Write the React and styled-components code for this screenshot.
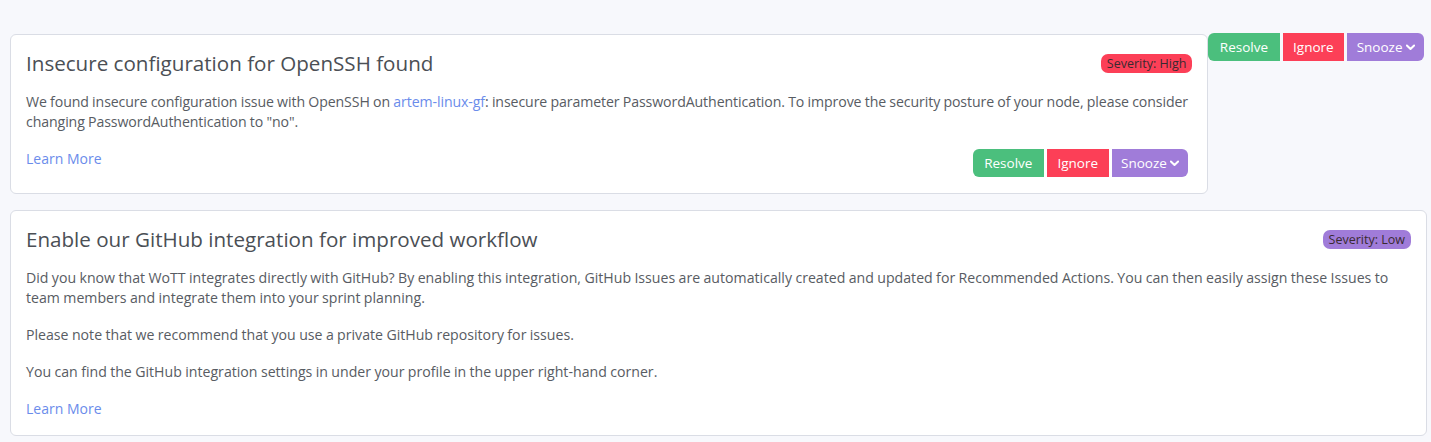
import React from "react";
import styled, { createGlobalStyle } from "styled-components";

const GlobalStyle = createGlobalStyle`
  html, body { margin: 0; padding: 0; background: #f7f8fc; }
  body { font-family: "Open Sans", "Noto Sans", sans-serif; color: #585c63; }
  * { box-sizing: border-box; }
`;

const Page = styled.div`
  padding: 33px 4px 7px 10px;
  display: flex;
  flex-direction: column;
  gap: 16px;
`;

const Row = styled.div`
  display: flex;
  align-items: flex-start;
`;

const Card = styled.div`
  flex: 1;
  min-width: 0;
  margin-top: ${(p) => (p.$offset ? "1px" : "0")};
  background: #fff;
  border: 1px solid #dadde5;
  border-radius: 6px;
  padding: 16px 15px 16px 15px;
`;

const Header = styled.div`
  display: flex;
  align-items: center;
  justify-content: space-between;
  margin-bottom: 17px;
`;

const Title = styled.h3`
  margin: 0;
  font-size: 20.6px;
  line-height: 24px;
  font-weight: 400;
  color: #4b4f55;
`;

const Badge = styled.span`
  display: inline-block;
  font-size: 12.5px;
  line-height: 19px;
  padding: 0 6px;
  border-radius: 7px;
  color: #3a2a30;
  background: ${(p) => p.$bg};
`;

const Text = styled.p`
  margin: 0 0 17px;
  font-size: 14.15px;
  line-height: 20px;
  word-spacing: -0.3px;
  letter-spacing: ${(p) => (p.$tight ? "-0.1px" : "0")};
`;

const Link = styled.a`
  color: #6b8ceb;
  text-decoration: none;
`;

const Footer = styled.div`
  display: flex;
  align-items: flex-start;
  justify-content: space-between;
  font-size: 14px;
  line-height: 20px;
`;

const Group = styled.div`
  display: flex;
  gap: 3px;
  margin-right: ${(p) => p.$mr || "0"};
  flex-shrink: 0;
`;

const Btn = styled.button`
  font-family: inherit;
  font-size: 13.5px;
  line-height: 20px;
  height: 28px;
  padding: 0 ${(p) => p.$px || "11px"};
  border: none;
  color: #fff;
  background: ${(p) => p.$bg};
  display: flex;
  align-items: center;
  gap: 3px;
  border-radius: 0;
  &:first-child { border-radius: 6px 0 0 6px; }
  &:last-child { border-radius: 0 6px 6px 0; }
`;

const Chevron = () => (
  <svg width="9" height="7" viewBox="0 0 10 7" aria-hidden="true">
    <path d="M1 1.2 L5 5.2 L9 1.2" fill="none" stroke="#fff" strokeWidth="2.2" strokeLinecap="round" strokeLinejoin="round" />
  </svg>
);

const Actions = ({ mr }) => (
  <Group $mr={mr}>
    <Btn $bg="#4bbf7d" $px="11.5px">Resolve</Btn>
    <Btn $bg="#fc3f57" $px="10.5px">Ignore</Btn>
    <Btn $bg="#a07cd9" $px="9.5px">
      Snooze
      <Chevron />
    </Btn>
  </Group>
);

export default function App() {
  return (
    <>
      <GlobalStyle />
      <Page>
        <Row>
          <Card $offset>
            <Header>
              <Title>Insecure configuration for OpenSSH found</Title>
              <Badge $bg="#fc3f57">Severity: High</Badge>
            </Header>
            <Text $tight>
              We found insecure configuration issue with OpenSSH on{" "}
              <Link href="#">artem-linux-gf</Link>: insecure parameter PasswordAuthentication. To
              improve the security posture of your node, please consider changing
              PasswordAuthentication to "no".
            </Text>
            <Footer>
              <Link href="#">Learn More</Link>
              <Actions mr="4px" />
            </Footer>
          </Card>
          <Actions mr="3px" />
        </Row>
        <Card>
          <Header>
            <Title>Enable our GitHub integration for improved workflow</Title>
            <Badge $bg="#a07cd9">Severity: Low</Badge>
          </Header>
          <Text>
            Did you know that WoTT integrates directly with GitHub? By enabling this integration,
            GitHub Issues are automatically created and updated for Recommended Actions. You can
            then easily assign these Issues to team members and integrate them into your sprint
            planning.
          </Text>
          <Text>Please note that we recommend that you use a private GitHub repository for issues.</Text>
          <Text>
            You can find the GitHub integration settings in under your profile in the upper
            right-hand corner.
          </Text>
          <Footer>
            <Link href="#">Learn More</Link>
          </Footer>
        </Card>
      </Page>
    </>
  );
}
